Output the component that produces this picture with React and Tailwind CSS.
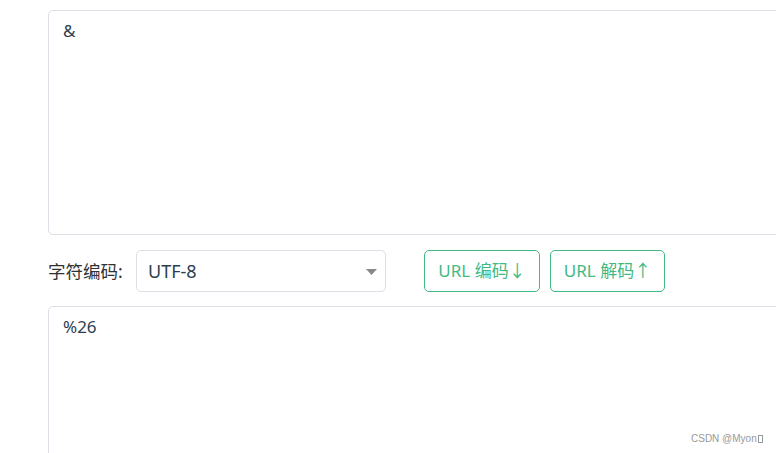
import { useState } from 'react';

export default function App() {
  const [input, setInput] = useState('&');
  const [output, setOutput] = useState('%26');

  return (
    <div className="w-[776px] h-[453px] overflow-hidden bg-white relative font-['Noto_Sans','Noto_Sans_CJK_SC',sans-serif]">
      <div className="pl-[48px] pt-[10px] w-[800px]">
        {/* input */}
        <textarea
          value={input}
          onChange={(e) => setInput(e.target.value)}
          className="block w-[760px] h-[225px] resize-none rounded-[5px] border border-[#dcdfe6] px-[14px] py-[8px] text-[17px] leading-[24px] text-[#2c3e50] outline-none"
        />

        {/* controls */}
        <div className="flex items-center h-[42px] mt-[15px]">
          <span className="w-[88px] text-[17.5px] text-[#303133]">字符编码:</span>
          <div className="relative w-[250px] h-[42px] rounded-[5px] border border-[#dcdfe6] flex items-center pl-[11px]">
            <span className="text-[18px] text-[#2c3e50]">UTF-8</span>
            <svg className="absolute right-[8px] top-[18px]" width="11" height="6" viewBox="0 0 11 6">
              <path d="M0 0 L11 0 L5.5 6 Z" fill="#888" />
            </svg>
          </div>
          <button className="ml-[38px] h-[42px] w-[116px] rounded-[5px] border border-[#42b983] text-[#42b983] text-[17px] flex items-center justify-center">
            URL 编码↓
          </button>
          <button className="ml-[10px] h-[42px] w-[115px] rounded-[5px] border border-[#42b983] text-[#42b983] text-[17px] flex items-center justify-center">
            URL 解码↑
          </button>
        </div>

        {/* output */}
        <textarea
          value={output}
          onChange={(e) => setOutput(e.target.value)}
          className="block mt-[14px] w-[760px] h-[225px] resize-none rounded-[5px] border border-[#dcdfe6] px-[14px] py-[8px] text-[17px] leading-[24px] text-[#2c3e50] outline-none"
        />
      </div>

      <span className="absolute left-[691px] top-[431px] flex items-center text-[10px] text-[#999] font-['Liberation_Sans',sans-serif]">
        CSDN @Myon
        <span className="ml-[1px] inline-block w-[5px] h-[8px] border border-[#999]" />
      </span>
    </div>
  );
}
